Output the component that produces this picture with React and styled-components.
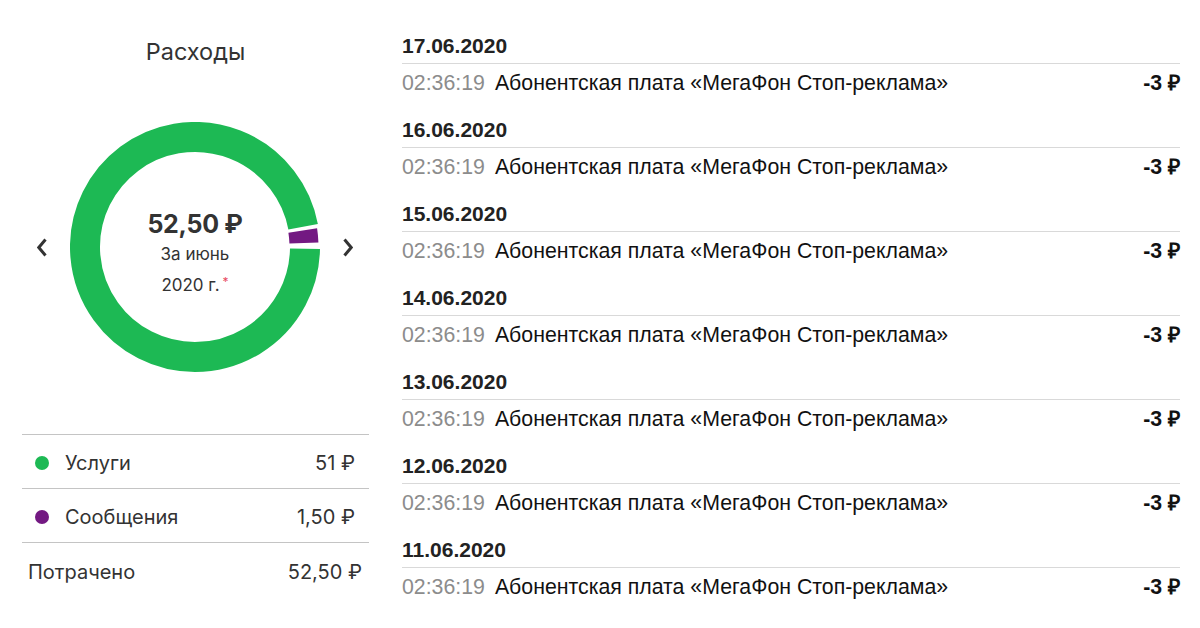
import React from "react";
import styled, { createGlobalStyle } from "styled-components";

const Global = createGlobalStyle`
  html, body { margin: 0; padding: 0; background: #fff; }
  body { font-family: "Liberation Sans", Arial, sans-serif; }
`;

const Page = styled.div`
  display: flex;
  gap: 33px;
  padding-left: 22px;
  width: 1200px;
  height: 628px;
  box-sizing: border-box;
  overflow: hidden;
`;

const Left = styled.div`
  width: 347px;
  flex: none;
  display: flex;
  flex-direction: column;
  font-family: Inter, "Noto Sans", sans-serif;
  color: #333;
`;

const Title = styled.div`
  margin-top: 37px;
  height: 30px;
  line-height: 30px;
  text-align: center;
  font-size: 23.5px;
  color: #333;
`;

const ChartRow = styled.div`
  margin-top: 55px;
  display: flex;
  align-items: center;
  justify-content: space-between;
  padding: 0 16px 0 15px;
`;

const Arrow = styled.button`
  border: 0;
  background: none;
  padding: 0;
  width: 10px;
  height: 19px;
  display: flex;
  cursor: pointer;
`;

const Donut = styled.div`
  position: relative;
  width: 250px;
  height: 250px;
`;

const Center = styled.div`
  position: absolute;
  inset: 0;
  padding-top: 87px;
  display: flex;
  flex-direction: column;
  align-items: center;
`;

const Total = styled.div`
  font-size: 25px;
  font-weight: 700;
  line-height: 30px;
  color: #333;
  letter-spacing: -0.3px;
`;

const Sub = styled.div`
  font-size: 17px;
  line-height: 27px;
  color: #333;
  margin-top: ${(p) => p.$mt || 0}px;
`;

const Star = styled.span`
  color: #e84a5f;
  font-size: 12px;
  vertical-align: 5px;
  margin-left: 3px;
`;

const Legend = styled.div`
  margin-top: 62px;
`;

const LegendRow = styled.div`
  display: flex;
  align-items: center;
  height: ${(p) => (p.$total ? 56 : 54)}px;
  padding: 3px ${(p) => (p.$total ? 7 : 14)}px 0 ${(p) => (p.$total ? 6 : 13)}px;
  box-sizing: border-box;
  border-top: 1px solid #c4c4c4;
  font-size: 20px;
  color: #333;
`;

const Dot = styled.span`
  width: 14px;
  height: 14px;
  border-radius: 50%;
  background: ${(p) => p.$color};
  margin-right: 16px;
  flex: none;
`;

const LegendLabel = styled.span`
  flex: 1;
`;

const LegendValue = styled.span``;

const Right = styled.div`
  width: 778px;
  flex: none;
  padding-top: 34px;
  font-family: "Liberation Sans", Arial, sans-serif;
`;

const Group = styled.div`
  height: 84px;
`;

const DateHead = styled.div`
  font-size: 21px;
  font-weight: 700;
  line-height: 24px;
  color: #222;
  padding-bottom: 5px;
  border-bottom: 1px solid #d9d9d9;
`;

const Item = styled.div`
  display: flex;
  align-items: center;
  line-height: 24px;
  padding-top: 7px;
  font-size: 21.3px;
  color: #111;
`;

const Time = styled.span`
  color: #8c8c8c;
  margin-right: 10px;
`;

const Desc = styled.span`
  flex: 1;
`;

const Amount = styled.span`
  font-weight: 700;
  color: #111;
`;

const GREEN = "#1db954";
const PURPLE = "#731982";

function pt(r, a) {
  const rad = (a * Math.PI) / 180;
  return [125 + r * Math.cos(rad), 125 - r * Math.sin(rad)];
}

function arc(r, a0, a1) {
  const [x0, y0] = pt(r, a0);
  const [x1, y1] = pt(r, a1);
  const large = a1 - a0 > 180 ? 1 : 0;
  return `M ${x0} ${y0} A ${r} ${r} 0 ${large} 0 ${x1} ${y1}`;
}

const Chevron = ({ dir }) => (
  <svg width="10" height="19" viewBox="0 0 10 19">
    <polyline
      points={dir === "left" ? "8.5,1.5 1.8,9.5 8.5,17.5" : "1.5,1.5 8.2,9.5 1.5,17.5"}
      fill="none"
      stroke="#333"
      strokeWidth="3"
      strokeLinejoin="miter"
    />
  </svg>
);

const days = ["17", "16", "15", "14", "13", "12", "11"];

export default function App() {
  return (
    <>
      <Global />
      <Page>
        <Left>
          <Title>Расходы</Title>
          <ChartRow>
            <Arrow aria-label="prev">
              <Chevron dir="left" />
            </Arrow>
            <Donut>
              <svg width="250" height="250" viewBox="0 0 250 250">
                <path d={arc(110, 10.6, 359.1)} fill="none" stroke={GREEN} strokeWidth="30" />
                <path d={arc(109, 2.1, 8.7)} fill="none" stroke={PURPLE} strokeWidth="29" />
              </svg>
              <Center>
                <Total>52,50 ₽</Total>
                <Sub $mt={2}>За июнь</Sub>
                <Sub>
                  2020 г.<Star>*</Star>
                </Sub>
              </Center>
            </Donut>
            <Arrow aria-label="next">
              <Chevron dir="right" />
            </Arrow>
          </ChartRow>
          <Legend>
            <LegendRow>
              <Dot $color={GREEN} />
              <LegendLabel>Услуги</LegendLabel>
              <LegendValue>51 ₽</LegendValue>
            </LegendRow>
            <LegendRow>
              <Dot $color={PURPLE} />
              <LegendLabel>Сообщения</LegendLabel>
              <LegendValue>1,50 ₽</LegendValue>
            </LegendRow>
            <LegendRow $total>
              <LegendLabel>Потрачено</LegendLabel>
              <LegendValue>52,50 ₽</LegendValue>
            </LegendRow>
          </Legend>
        </Left>
        <Right>
          {days.map((d) => (
            <Group key={d}>
              <DateHead>{d}.06.2020</DateHead>
              <Item>
                <Time>02:36:19</Time>
                <Desc>Абонентская плата «МегаФон Стоп-реклама»</Desc>
                <Amount>-3 ₽</Amount>
              </Item>
            </Group>
          ))}
        </Right>
      </Page>
    </>
  );
}
